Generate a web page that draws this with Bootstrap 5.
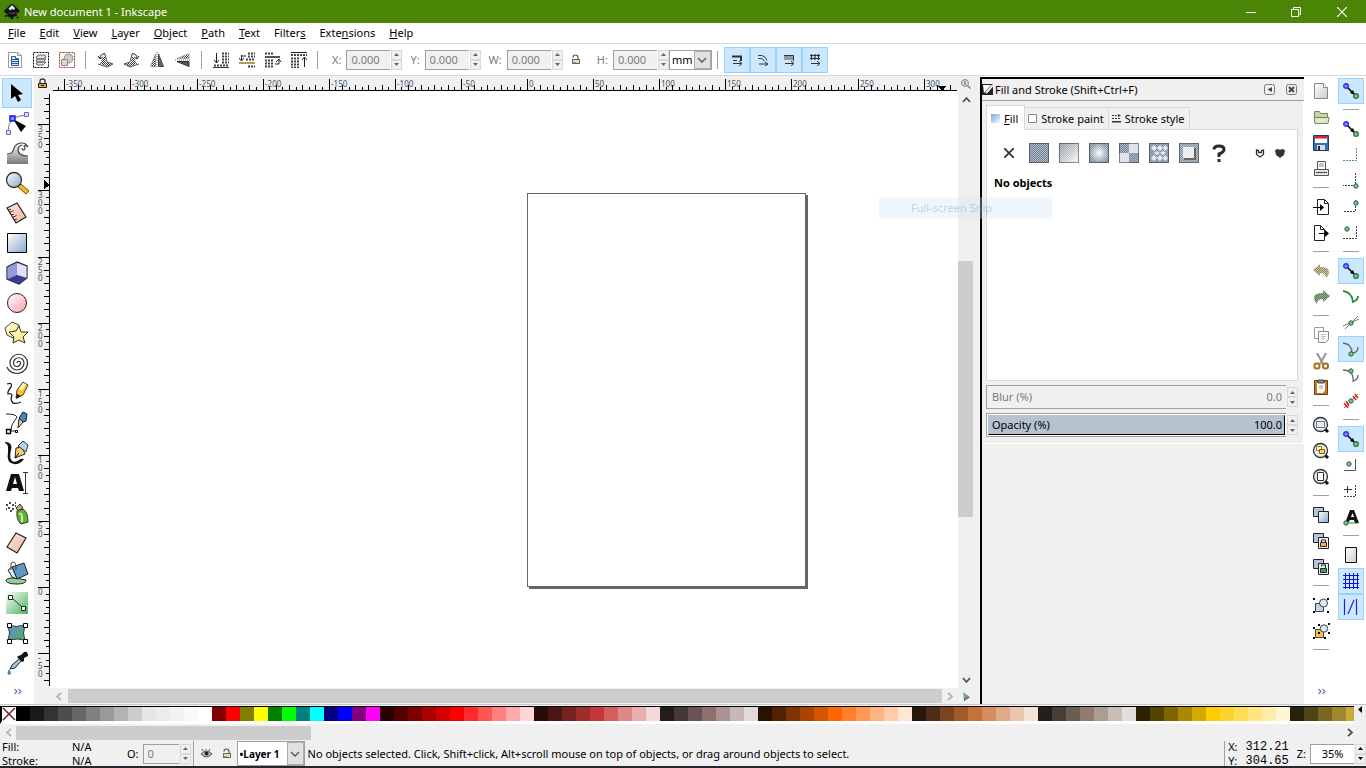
<!DOCTYPE html>
<html lang="en">
<head>
<meta charset="utf-8">
<meta name="viewport" content="width=device-width, initial-scale=1">
<title>New document 1 - Inkscape</title>
<link rel="stylesheet" href="https://cdn.jsdelivr.net/npm/bootstrap@5.3.0/dist/css/bootstrap.min.css">
<style>
  :root { --face:#f0f0f0; --edge:#d9d9d9; --line:#a0a0a0; --thumb:#cdcdcd; --on:#cce8ff; --on-edge:#99d1ff; --dim:#7b7b7b; }
  body { font-family:"Noto Sans","Open Sans",sans-serif; font-size:11px; line-height:14px; color:#000; background:#fff; }
  button { padding:0; border:0; background:none; color:inherit; line-height:1; }
  svg { display:block; flex:none; }
  .titlebar { height:23px; background:#4b8505; color:#fff; }
  .titlebar button { width:45px; height:23px; }
  .titlebar button:last-child { width:48px; }
  .menubar { height:21px; border-bottom:1px solid var(--edge); padding-left:1px; }
  .menubar .nav-link { padding:3px 7px; color:#000; }
  .toolbar { height:32px; border-bottom:1px solid var(--edge); padding-left:2px; }
  .tb { width:26px; height:26px; display:grid; place-items:center; flex:none; }
  .vsep { width:1px; height:18px; background:var(--line); margin:0 6px 0 5px; flex:none; }
  .on { background:var(--on); border:1px solid var(--on-edge); }
  .field { display:flex; align-items:center; color:var(--dim); }
  .field label { margin-right:5px; }
  .field input { width:44px; height:20px; border:1px solid var(--line); border-right:0; padding:0 4px; background:var(--face); color:var(--dim); border-radius:0; min-width:0; }
  .spin { display:flex; flex-direction:column; width:11px; margin-left:1px; }
  .spin button { height:10px; background:var(--face); border:1px solid var(--edge); display:grid; place-items:center; color:#666; }
  .pick { display:flex; border:1px solid var(--line); background:#fff; }
  .pick select { appearance:none; border:0; background:#fff; color:#000; padding:0 2px; flex:1; min-width:0; }
  .pick span { display:grid; place-items:center; width:17px; background:#e1e1e1; border:1px solid #adadad; }
  .unit { width:43px; height:20px; }
  .toolbox { width:34px; padding-top:2px; }
  .toolbox button { width:30px; height:30px; display:grid; place-items:center; flex:none; }
  .toolbox button:last-child { height:26px; }
  .strip { width:30px; padding-top:2px; }
  .strip hr { width:16px; height:1px; margin:5px 0 6px; border:0; background:var(--line); opacity:1; flex:none; }
  .work { display:grid; grid-template-columns:16px minmax(0,1fr) 22px; grid-template-rows:15px minmax(0,1fr) 16px; background:var(--face); }
  .work svg text { font-size:8px; fill:#40536a; }
  .sheet-area { background:#fff; overflow:hidden; }
  .sheet { left:477px; top:102px; width:279px; height:394px; border:1px solid #666; box-shadow:2px 2px 0 #666; }
  .vbar, .corner { width:16px; }
  .corner { display:grid; place-items:center; }
  .arrow { width:16px; height:16px; display:grid; place-items:center; flex:none; }
  .hthumb { height:14px; background:var(--thumb); margin-left:2px; }
  .vthumb { flex:256 0 0; background:var(--thumb); margin-right:1px; }
  .dock { width:324px; background:var(--face); border-left:2px solid #000; border-top:2px solid #000; margin:1px 2px 0 0; }
  .dock-head { height:22px; border-bottom:1px solid var(--line); padding-right:6px; gap:10px; }
  .dock-body { padding:4px 5px 6px 4px; border-right:1px solid #fff; border-bottom:1px solid #fff; }
  .tabs .nav-link { color:#000; padding:0 4px 0 3px; height:22px; border:1px solid var(--edge); border-left:0; border-bottom:0; border-radius:0; display:flex; align-items:center; gap:4px; }
  .tabs .nav-link.active { height:25px; background:#fff; border-left:1px solid var(--edge); position:relative; margin-bottom:-1px; padding:0 6px 0 4px; }
  .pane { height:252px; background:#fff; border:1px solid var(--edge); padding:8px 7px; }
  .pane .paint { width:30px; height:30px; display:grid; place-items:center; }
  .pane .rule { width:20px; height:30px; display:grid; place-items:center; }
  .slide { display:flex; align-items:center; }
  .slide .bar { height:24px; border:1px solid var(--line); border-right:0; padding:1px; }
  .slide .fillbar { height:20px; padding:0 2px 0 3px; border:1px solid transparent; }
  .slide .full { background:#b6c3ce; border-right-color:#000; border-bottom-color:#000; }
  .slide input { border:0; padding:0; background:none; width:60px; text-align:right; color:inherit; }
  .snip { right:314px; top:121px; width:173px; height:22px; background:rgba(205,230,250,.32); color:rgba(110,110,110,.3); padding:4px 32px; white-space:nowrap; pointer-events:none; }
  .palette { height:21px; background:var(--face); border-top:1px solid #c8c8c8; padding-top:1px; }
  .swatches { border-top:1px solid #000; border-left:2px solid #000; border-bottom:3px solid #fff; height:18px; overflow:hidden; }
  .swatches button { width:14px; height:14px; flex:none; }
  .status { height:26px; background:var(--face); padding-top:1px; }
  .status .field label { margin-right:4px; }
  .status .vsep { margin:0 3px 0 2px; height:26px; }
  .status .layer { width:68px; height:25px; }
  .status .message { margin-left:3px; }
  .tinybtn { width:20px; height:20px; display:grid; place-items:center; flex:none; }
  .paintnames { width:127px; }
  .paintnames div:first-child { width:72px; padding-left:2px; }
  .coords { font-family:"Liberation Mono",monospace; font-size:12px; }
  .foot { height:2px; background:#24262b; }
</style>
</head>
<body class="vh-100 overflow-hidden d-flex flex-column">

<!-- shared symbols -->
<svg width="0" height="0" class="position-absolute" aria-hidden="true">
  <defs>
    <pattern id="dots" width="2" height="2" patternUnits="userSpaceOnUse"><path d="M0 0h1v1H0zM1 1h1v1H1z" fill="#333"/></pattern>
    <pattern id="haze" width="2" height="2" patternUnits="userSpaceOnUse"><path d="M0 0h1v1H0zM1 1h1v1H1z" fill="#f6f6f6"/></pattern>
    <linearGradient id="blue" x2="1" y2="1"><stop stop-color="#fff"/><stop offset="1" stop-color="#86a8cb"/></linearGradient>
    <linearGradient id="gBlue" x2="1" y2="1"><stop stop-color="#7da7d9"/><stop offset="1" stop-color="#f4f8fc"/></linearGradient>
    <linearGradient id="pink" x2="1" y2="1"><stop stop-color="#fff"/><stop offset="1" stop-color="#ff9fae"/></linearGradient>
    <linearGradient id="peach" x2="1" y2="1"><stop stop-color="#fbe9e2"/><stop offset="1" stop-color="#eeb49d"/></linearGradient>
    <linearGradient id="yel" x2="1" y2="1"><stop stop-color="#fff"/><stop offset="1" stop-color="#ffe45c"/></linearGradient>
    <linearGradient id="grn" x2="1" y2="1"><stop stop-color="#fff"/><stop offset="1" stop-color="#46b35a"/></linearGradient>
    <linearGradient id="grey" x2="0" y2="1"><stop stop-color="#fff"/><stop offset="1" stop-color="#777"/></linearGradient>
    <linearGradient id="mesh" x2="1" y2="1"><stop stop-color="#5a92c8"/><stop offset="1" stop-color="#5aa862"/></linearGradient>
    <linearGradient id="sheetg" x2="1" y2="1"><stop stop-color="#fff"/><stop offset="1" stop-color="#ccc"/></linearGradient>
    <linearGradient id="dimg" x2="1" y2="1"><stop stop-color="#7d8b99"/><stop offset="1" stop-color="#fff"/></linearGradient>
    <radialGradient id="dimr"><stop stop-color="#fff"/><stop offset="1" stop-color="#74869a"/></radialGradient>
    <symbol id="up" viewBox="0 0 5 3"><path d="M2.500 0L5 3H0z" fill="currentColor"/></symbol>
    <symbol id="dn" viewBox="0 0 5 3"><path d="M2.500 3L5 0H0z" fill="currentColor"/></symbol>
    <symbol id="chev" viewBox="0 0 10 10"><path d="M1 3l4 4 4-4" fill="none" stroke="#555" stroke-width="1.300"/></symbol>
    <symbol id="unlock" viewBox="0 0 10 11"><path d="M2 3.500Q2 1 4.500 1T7 3.500V6" fill="none" stroke="#555" stroke-width="1.200"/><rect x="1.500" y="5.500" width="7" height="4" fill="#e8dfa8" stroke="#666"/><path d="M2 8h3v1H2z" fill="#998"/></symbol>
    <symbol id="nodes" viewBox="0 0 16 16"><path d="M4 4l7 7" stroke="#000" stroke-width="1.600"/><path d="M12 12l-5-2 3-3z"/><circle cx="3" cy="3" r="2.300" fill="#88f" stroke="#33d" stroke-width="1.400"/><circle cx="13" cy="13" r="2.300" fill="#9bc3a0" stroke="#277a37" stroke-width="1.400"/></symbol>
    <symbol id="more" viewBox="0 0 8 7"><path d="M1 1l2.500 2.500L1 6M5 1l2.500 2.500L5 6" fill="none" stroke="#7676b0" stroke-width="1.200"/></symbol>
    <symbol id="lens" viewBox="0 0 18 18"><path d="M13 13l3 3" stroke="#111" stroke-width="3"/><circle cx="8.500" cy="8.500" r="7" fill="#e4ebf2" stroke="#333" stroke-width="1.300"/></symbol>
    <symbol id="nod" viewBox="0 0 6 6"><circle cx="3" cy="3" r="2.200" fill="#8ab894" stroke="#246b30"/></symbol>
  </defs>
</svg>

<header class="titlebar d-flex align-items-center flex-shrink-0 ps-1">
  <svg width="16" height="16" viewBox="0 0 16 16"><path d="M8 0q1.500 0 3 2l4 4q2 2-1 2.500l-2 1q2 1 1 2t-3 1l-2 3.500-2-2.500-3-1.500q1-1 0-2L.5 8Q-.5 6.500 2 5l4-4q1-1 2-1z" fill="#111"/><path d="M8 1l3 3-1 2-2-1-2 1.500L4.500 4.500z" fill="#dfe6f2"/><path d="M3 8l5 1 5-1-3 2H6z" fill="#445"/><circle cx="2" cy="12" r="1" fill="#111"/><circle cx="13.500" cy="13.500" r="1" fill="#111"/></svg>
  <span class="ms-1 flex-fill">New document 1 - Inkscape</span>
  <button type="button" aria-label="Minimize"><svg class="mx-auto" width="10" height="10"><path d="M0 5.500h10" stroke="#fff"/></svg></button>
  <button type="button" aria-label="Restore"><svg class="mx-auto" width="10" height="10"><path d="M.5 2.500h7v7h-7zM2.500 2.500v-2h7v7h-2" fill="none" stroke="#fff"/></svg></button>
  <button type="button" aria-label="Close"><svg class="mx-auto" width="10" height="10"><path d="M0 0l10 10M10 0L0 10" stroke="#fff" stroke-width="1.200"/></svg></button>
</header>

<nav class="menubar nav flex-nowrap flex-shrink-0" aria-label="Main menu">
  <a class="nav-link" href="#"><u>F</u>ile</a><a class="nav-link" href="#"><u>E</u>dit</a><a class="nav-link" href="#"><u>V</u>iew</a><a class="nav-link" href="#"><u>L</u>ayer</a><a class="nav-link" href="#"><u>O</u>bject</a><a class="nav-link" href="#"><u>P</u>ath</a><a class="nav-link" href="#"><u>T</u>ext</a><a class="nav-link" href="#">Filter<u>s</u></a><a class="nav-link" href="#">Exte<u>n</u>sions</a><a class="nav-link" href="#"><u>H</u>elp</a>
</nav>

<div class="toolbar d-flex align-items-center flex-shrink-0" role="toolbar" aria-label="Select controls">
  <button class="tb" type="button" aria-label="Select all"><svg width="14" height="16"><path d="M.5.5h9l4 3v12H.5z" fill="#fff" stroke="#999"/><path d="M9.500.5v3h4" fill="none" stroke="#999"/><path d="M3.500 4.500h4v2h3v7h-7z" fill="#dbe7f6" stroke="#2558a8"/><path d="M4 7.500h6M4 9.500h6M4 11.500h6" stroke="#2558a8"/></svg></button>
  <button class="tb" type="button" aria-label="Select all in all layers"><svg width="16" height="16"><path d="M.5.5h15v15H.5z" fill="none" stroke="#000" stroke-dasharray="2 1"/><path d="M3 5l3-2h6l1 2-3 2H4zM3 8l3-1h7l-3 3H4zM3 11l3-1h7l-3 3H4z" fill="#ddd" stroke="#666"/></svg></button>
  <button class="tb" type="button" aria-label="Deselect"><svg width="16" height="16"><path d="M.5.5h15v15H.5z" fill="none" stroke="#a33" stroke-dasharray="2 1"/><circle cx="9.500" cy="6.500" r="4.500" fill="#c9ced3" stroke="#888"/><path d="M2.500 7.500h6v6h-6z" fill="#e8d6ad" stroke="#888"/></svg></button>
  <i class="vsep"></i>
  <button class="tb" type="button" aria-label="Rotate left"><svg width="17" height="16"><path d="M8 3l1 8H3zM2 11l7-1 7 2-6 3z" fill="url(#dots)"/><path d="M8 2l2 8 6 2-6 3-9-3" stroke="#555" fill="none"/><path d="M3 6Q3 2 8 1.500M1 4l2 3 3-2" fill="none" stroke="#222"/></svg></button>
  <button class="tb" type="button" aria-label="Rotate right"><svg width="17" height="16"><path d="M9 3L8 11h6zM15 11l-7-1-7 2 6 3z" fill="url(#dots)"/><path d="M9 2L7 10l-6 2 6 3 9-3" stroke="#555" fill="none"/><path d="M14 6Q14 2 9 1.500M16 4l-2 3-3-2" fill="none" stroke="#222"/></svg></button>
  <button class="tb" type="button" aria-label="Flip horizontal"><svg width="16" height="16"><path d="M6.500 2v12.500h-5z" fill="url(#dots)" stroke="#999"/><path d="M9.500 2v12.500h5z" fill="#666" stroke="#444"/><path d="M8 0v16" stroke="#555" stroke-dasharray="1 1"/></svg></button>
  <button class="tb" type="button" aria-label="Flip vertical"><svg width="16" height="16"><path d="M14 6.500H2L14 1.500z" fill="url(#dots)" stroke="#aaa"/><path d="M14 9.500H2l12 5z" fill="#555" stroke="#333"/><path d="M0 8h16" stroke="#777" stroke-dasharray="1 1"/></svg></button>
  <i class="vsep"></i>
  <button class="tb" type="button" aria-label="Lower to bottom"><svg width="17" height="16"><path d="M3.500 1v10M1 8l2.500 3L6 8" fill="none" stroke="#222"/><path d="M9 1.500h7M9 4.500h7M9 7.500h7M9 10.500h7M1 13.500h15" stroke="#444" stroke-dasharray="2 1" stroke-width="2"/><path d="M0 15.500h16" stroke="#333"/></svg></button>
  <button class="tb" type="button" aria-label="Lower"><svg width="17" height="16"><path d="M2.500 3v5M0 6l2.500 3L5 6M3 4h4" fill="none" stroke="#222"/><path d="M9 1.500h7M9 4.500h7M7 7.500h9M9 14.500h7" stroke="#444" stroke-dasharray="2 1" stroke-width="2"/><path d="M0 11h16" stroke="#b59b5c" stroke-width="2"/></svg></button>
  <button class="tb" type="button" aria-label="Raise"><svg width="17" height="16"><path d="M0 1.500h8M0 8.500h8M0 11.500h8M0 14.500h8" stroke="#444" stroke-dasharray="2 1" stroke-width="2"/><path d="M0 5h15" stroke="#555" stroke-width="2"/><path d="M14 12V8M11 10l3-3 2 3M10 12h4" fill="none" stroke="#222"/></svg></button>
  <button class="tb" type="button" aria-label="Raise to top"><svg width="17" height="16"><path d="M0 .5h16" stroke="#222"/><path d="M0 3h16M0 6.500h8M0 9.500h8M0 12.500h8M0 15.500h8" stroke="#444" stroke-dasharray="2 1" stroke-width="2"/><path d="M13.500 15V6M11 8l2.500-3L16 8" fill="none" stroke="#222"/></svg></button>
  <i class="vsep"></i>
  <div class="field ms-2"><label for="fx">X:</label><input id="fx" value="0.000" disabled><div class="spin"><button type="button" aria-label="Increase X"><svg width="5" height="3"><use href="#up"/></svg></button><button type="button" aria-label="Decrease X"><svg width="5" height="3"><use href="#dn"/></svg></button></div></div>
  <div class="field ms-2"><label for="fy">Y:</label><input id="fy" value="0.000" disabled><div class="spin"><button type="button" aria-label="Increase Y"><svg width="5" height="3"><use href="#up"/></svg></button><button type="button" aria-label="Decrease Y"><svg width="5" height="3"><use href="#dn"/></svg></button></div></div>
  <div class="field ms-2"><label for="fw">W:</label><input id="fw" value="0.000" disabled><div class="spin"><button type="button" aria-label="Increase W"><svg width="5" height="3"><use href="#up"/></svg></button><button type="button" aria-label="Decrease W"><svg width="5" height="3"><use href="#dn"/></svg></button></div></div>
  <button class="tb" type="button" aria-label="Lock ratio"><svg width="10" height="11"><use href="#unlock"/></svg></button>
  <div class="field ms-2"><label for="fh">H:</label><input id="fh" value="0.000" disabled><div class="spin"><button type="button" aria-label="Increase H"><svg width="5" height="3"><use href="#up"/></svg></button><button type="button" aria-label="Decrease H"><svg width="5" height="3"><use href="#dn"/></svg></button></div></div>
  <div class="pick unit"><select aria-label="Unit" id="unit"><option>mm</option></select><span><svg width="10" height="10"><use href="#chev"/></svg></span></div>
  <i class="vsep"></i>
  <button class="tb on" type="button" aria-label="Scale stroke width"><svg width="12" height="12"><path d="M1 2.500h9V7" fill="none" stroke="#333" stroke-width="2"/><path d="M2 6.500h4M2 9.500h8M8 7l3 2.500L8 12" stroke="#333" fill="none"/></svg></button>
  <button class="tb on" type="button" aria-label="Scale rounded corners"><svg width="12" height="12"><path d="M1 1.500h4q4 1 5 5M1 4.500h3q3 0 3 3" fill="none" stroke="#444"/><path d="M2 10h8M8 8l3 2-3 2" stroke="#333" fill="none"/></svg></button>
  <button class="tb on" type="button" aria-label="Move gradients"><svg width="12" height="12"><path d="M1 1h9v5H1z" fill="#8b98a5"/><path d="M1 1.500h9.500V7M2 9.500h8M8 7l3 2.500L8 12" stroke="#333" fill="none"/></svg></button>
  <button class="tb on" type="button" aria-label="Move patterns"><svg width="12" height="12"><path d="M1 1.500h10M1 4.500h10M2.500 0v6M6 0v6M9.500 0v6" stroke="#333" stroke-width="1.200"/><path d="M2 9.500h8M8 7l3 2.500L8 12" stroke="#333" fill="none"/></svg></button>
</div>

<main class="d-flex flex-fill position-relative" style="min-height:0">
  <div class="toolbox d-flex flex-column align-items-center flex-shrink-0" role="toolbar" aria-label="Tools">
    <button class="on" type="button" aria-label="Select"><svg width="22" height="24"><path d="M5 3v15l4-3 3 6 3-2-3-5 5-1z"/></svg></button>
    <button type="button" aria-label="Edit nodes"><svg width="24" height="24"><path d="M3 20Q3 5 21 4" fill="none" stroke="#777"/><path d="M8 8l13 7-5 6z"/><path d="M5 5h5v5H5z" fill="#88f" stroke="#11d" stroke-width="1.400"/><path d="M19.500 1.500h4v4h-4zM1.500 19.500h4v4h-4z" fill="#ddf" stroke="#66c"/></svg></button>
    <button type="button" aria-label="Tweak"><svg width="24" height="24"><path d="M2 23V13q6 0 7-6 2-5 8-5 4 0 6 4-5-3-7 0-3 5 0 7 2 2 7 2v8z" fill="url(#grey)"/><path d="M2 13q6 0 7-6 2-5 8-5 4 0 6 4-2-2-4-1 2 3 0 4-2 0-2-2M17 4q-4 1-4 5 0 6 10 6" fill="none" stroke="#444" stroke-width="1.200"/></svg></button>
    <button type="button" aria-label="Zoom"><svg width="26" height="26"><path d="M14 17l3-3 8 7-3 3z" fill="#f7b32d" stroke="#7a4a00"/><circle cx="10" cy="10" r="7.500" fill="url(#blue)" stroke="#333" stroke-width="1.300"/></svg></button>
    <button type="button" aria-label="Measure"><svg width="24" height="26"><path d="M2 8l10-5 9 14-10 6z" fill="url(#peach)" stroke="#222" stroke-width="1.200"/><path d="M3 10l3-1M4.500 12.500l4-2M6 15l3-1M7.500 17.500l4-2M9 20l3-1" stroke="#622"/></svg></button>
    <button type="button" aria-label="Rectangle"><svg width="22" height="22"><path d="M1.500 1.500h19v19h-19z" fill="url(#blue)" stroke="#000"/></svg></button>
    <button type="button" aria-label="3D box"><svg width="24" height="26"><path d="M2 7l10-5 10 4v12l-8 6L2 19z" fill="#8a8ad2" stroke="#223" stroke-width="1.200"/><path d="M2.500 7.500l9-4.500v13l-9 3z" fill="#9a9ae0"/><path d="M12 3l9.500 3.500v11L12 15z" fill="#e0e0fa"/><path d="M12 15l9 3-7 5.500-11-4.500z" fill="#3a3a9c"/></svg></button>
    <button type="button" aria-label="Ellipse"><svg width="22" height="22"><circle cx="11" cy="11" r="9.500" fill="url(#pink)" stroke="#222"/></svg></button>
    <button type="button" aria-label="Star"><svg width="26" height="24"><path d="M8 1l7 3 0 8-6 5-6-3-2-7z" fill="url(#yel)" stroke="#443"/><path d="M15 5l2 6 7 0-5 5 2 6-6-3-6 3 1-6-5-5 7-1z" fill="url(#yel)" stroke="#332"/></svg></button>
    <button type="button" aria-label="Spiral"><svg width="24" height="24"><path d="M12 12A1.750 1.750 0 0 1 15.500 12A3.500 3.500 0 0 1 8.500 12A5.250 5.250 0 0 1 19 12A7 7 0 0 1 5 12A8.750 8.750 0 0 1 22.500 12A10.500 10.500 0 0 1 12 22.500Q4 22 2 16" fill="none" stroke="#333" stroke-width="1.200"/></svg></button>
    <button type="button" aria-label="Pencil"><svg width="24" height="24"><path d="M2 3q6-2 4 3-4 5-3 7 3-1 4 1-2 5 1 8 4 1 8-1" fill="none" stroke="#222" stroke-width="1.300"/><path d="M11 17l1-8 6-8 5 3-5 10z" fill="#ffc02e" stroke="#533"/><path d="M11 18l1-5 4 2z" fill="#111"/><path d="M14 8l4-6 3 1-4 7z" fill="#fff3ae"/></svg></button>
    <button type="button" aria-label="Bezier"><svg width="24" height="24"><path d="M1 3q10 0 11 3-2 3-5 8-1 3-1 6h6" fill="none" stroke="#222"/><path d="M13 17l1-9 5 2z" fill="#eecd90" stroke="#222"/><path d="M14 7l4-6 4 2-1 7-3 1z" fill="#4b86b8" stroke="#123"/><path d="M1.500 18.500h4v4h-4z" fill="#fff" stroke="#000" stroke-width="1.300"/><path d="M10.500 19.500h2v2h-2z" fill="#fff" stroke="#000"/></svg></button>
    <button type="button" aria-label="Calligraphy"><svg width="26" height="26"><path d="M1 2q8 0 6 8-2 8 1 11 3 2 7-1 2-2 5-1-4 6-10 5Q2 23 4 12 5 4 1 3z" fill="#111"/><path d="M11 18l1-10 6-1 3 7z" fill="#f5cf6c" stroke="#321"/><path d="M14 6l5-5 5 4-2 7z" fill="#b8d4ea" stroke="#234"/><path d="M11 18l4-5" stroke="#000"/></svg></button>
    <button type="button" aria-label="Text"><svg width="24" height="24"><path d="M6 3h8l5 17h-5l-1-3H7l-1 3H1zM8 13h4L10 6z" fill="#111" fill-rule="evenodd"/><path d="M18 1.500h5M20.500 2v20M18 22.500h5" stroke="#333"/></svg></button>
    <button type="button" aria-label="Spray"><svg width="26" height="26"><path d="M2 5h2M5 3h2M4 8h2M8 5h2M8 9h2M2 9h1M11 6h1M6 11h2M11 3h1" stroke="#111" stroke-width="1.500"/><path d="M13 11l6-2q5 3 5 13l-7 2q-5-4-4-13z" fill="#62b133" stroke="#333"/><path d="M15 14q4-2 3 8" stroke="#c7f29b" stroke-width="2" fill="none"/><path d="M12 8l4-4 3 4-5 3z" fill="#c8a86a" stroke="#333"/></svg></button>
    <button type="button" aria-label="Eraser"><svg width="24" height="26"><path d="M2 17L11 3l10 5-9 15z" fill="url(#peach)" stroke="#222" stroke-width="1.200"/></svg></button>
    <button type="button" aria-label="Paint bucket"><svg width="26" height="26"><path d="M2 21q0-3 6-3t14 2q0 4-9 4T2 21z" fill="#8fd39a" stroke="#222"/><path d="M8 7l12-4 4 11-11 5z" fill="#5f97c4" stroke="#222"/><path d="M4 10l4-3 5 12-5-2z" fill="#dcebf5" stroke="#222"/><path d="M7 10V3q4-3 5 3v4" fill="none" stroke="#444"/></svg></button>
    <button type="button" aria-label="Gradient"><svg width="24" height="24"><path d="M1 1h22v22H1z" fill="url(#grn)"/><path d="M7 7l10 9" stroke="#333"/><path d="M3.500 4.500h4v4h-4zM16.500 15.500h4v4h-4z" fill="#fff" stroke="#222"/></svg></button>
    <button type="button" aria-label="Mesh"><svg width="24" height="24"><path d="M3 4q8 3 17 0-3 8 0 16-7-4-17 0 3-8 0-16z" fill="url(#mesh)" stroke="#233"/><path d="M2.500 2.500h4v4h-4zM18.500 2.500h4v4h-4zM2.500 18.500h4v4h-4zM18.500 18.500h4v4h-4z" fill="#fff" stroke="#000"/></svg></button>
    <button type="button" aria-label="Dropper"><svg width="24" height="26"><path d="M5 19l2-4 8-7 2 2-7 8z" fill="#9cc3df" stroke="#222"/><path d="M13 6l3-1 3-3q4-1 4 4l-4 2 0 3-2 1-5-5z" fill="#111"/><path d="M4 19q4 5 0 6-3-1 0-6z" fill="#4c86b8"/></svg></button>
    <button type="button" aria-label="More tools"><svg width="9" height="7"><use href="#more"/></svg></button>
  </div>

  <div class="work flex-fill" style="min-width:0">
    <div class="corner"><svg width="9" height="11"><path d="M2 5V3q0-2 2.500-2T7 3v2" fill="none" stroke="#333" stroke-width="1.300"/><path d="M.5 5.500h8v4h-8z" fill="#e5a92c" stroke="#222"/><path d="M3 7.500h3" stroke="#222"/></svg></div>
    <svg id="hruler" width="100%" height="15" shape-rendering="crispEdges" role="img" aria-label="Horizontal ruler"></svg>
    <button class="corner" type="button" aria-label="Zoom with window"><svg width="10" height="10"><circle cx="4" cy="4" r="3.500" fill="#ddd" stroke="#888"/><path d="M4 2v4M6.500 6.500L9.500 9.500" stroke="#777" stroke-width="1.300"/></svg></button>
    <svg id="vruler" width="16" height="100%" shape-rendering="crispEdges" role="img" aria-label="Vertical ruler"></svg>
    <div class="sheet-area position-relative"><div class="sheet position-absolute"></div></div>
    <div class="d-flex flex-column vbar">
      <button class="arrow" type="button" aria-label="Scroll up"><svg width="9" height="7"><path d="M1 6l3.500-4L8 6" fill="none" stroke="#505050" stroke-width="1.800"/></svg></button>
      <div style="flex:154 0 0"></div><div class="vthumb"></div><div style="flex:155 0 0"></div>
      <button class="arrow" type="button" aria-label="Scroll down"><svg width="9" height="7"><path d="M1 1l3.500 4L8 1" fill="none" stroke="#505050" stroke-width="1.800"/></svg></button>
    </div>
    <div></div>
    <div class="d-flex align-items-center">
      <button class="arrow" type="button" aria-label="Scroll left"><svg width="7" height="9"><path d="M6 1L2 4.500 6 8" fill="none" stroke="#b5b5b5" stroke-width="1.800"/></svg></button>
      <div class="hthumb flex-fill"></div>
      <button class="arrow" type="button" aria-label="Scroll right"><svg width="7" height="9"><path d="M1 1l4 3.500L1 8" fill="none" stroke="#b5b5b5" stroke-width="1.800"/></svg></button>
    </div>
    <button class="corner" type="button" aria-label="Color-managed view"><svg width="9" height="9"><path d="M1 0l7 5-6 4z" fill="#6fb27f"/><path d="M4 5l4 0-3 2z" fill="#c33"/><path d="M2 6l3 1-3 2z" fill="#55a"/></svg></button>
  </div>

  <aside class="dock flex-shrink-0 d-flex flex-column">
    <div class="dock-head d-flex align-items-center">
      <div class="flex-fill d-flex align-items-center"><svg width="13" height="13"><path d="M0 1h11v11H0z" fill="#222"/><path d="M1 2h8L2 10z" fill="#fff"/><path d="M4 10l7-8" stroke="#eee" stroke-width="2"/></svg>Fill and Stroke (Shift+Ctrl+F)</div>
      <button type="button" aria-label="Iconify dialog"><svg width="12" height="12"><rect x=".5" y=".5" width="10" height="10" rx="2" fill="none" stroke="#777"/><path d="M8 3v5L3.500 5.500z" fill="#444"/></svg></button>
      <button type="button" aria-label="Close dialog"><svg width="12" height="12"><rect x=".5" y=".5" width="10" height="10" rx="2" fill="none" stroke="#777"/><path d="M3 3l5 5M8 3L3 8" stroke="#444" stroke-width="2"/></svg></button>
    </div>
    <div class="dock-body">
      <div class="tabs nav flex-nowrap align-items-end">
        <button class="nav-link active" type="button"><svg width="9" height="9"><path d="M0 0h9v9H0z" fill="url(#gBlue)"/></svg><span><u>F</u>ill</span></button>
        <button class="nav-link" type="button"><svg width="9" height="9"><path d="M.5.5h8v8h-8z" fill="#fff" stroke="#888"/></svg>Stroke paint</button>
        <button class="nav-link" type="button"><svg width="9" height="9"><path d="M0 1.500h8M0 4.500h9" stroke="#333" stroke-dasharray="2 1"/><path d="M6 0l3 1.500L6 3zM0 7h9v1.500H0z" fill="#333"/></svg>Stroke style</button>
      </div>
      <div class="pane">
        <div class="d-flex" role="group" aria-label="Paint type">
          <button class="paint" type="button" aria-label="No paint"><svg width="10" height="10"><path d="M0 0l10 10M10 0L0 10" stroke="#333" stroke-width="1.800"/></svg></button>
          <button class="paint" type="button" aria-label="Flat color"><svg width="20" height="20"><path d="M0 0h20v20H0z" fill="#74869a"/><path d="M0 0h20v20H0z" fill="url(#haze)" opacity=".45"/><path d="M.5.5h19v19H.5z" fill="none" stroke="#222" stroke-dasharray="1 1"/></svg></button>
          <button class="paint" type="button" aria-label="Linear gradient"><svg width="20" height="20"><path d="M0 0h20v20H0z" fill="url(#dimg)"/><path d="M0 0h20v20H0z" fill="url(#haze)" opacity=".45"/><path d="M.5.5h19v19H.5z" fill="none" stroke="#222" stroke-dasharray="1 1"/></svg></button>
          <button class="paint" type="button" aria-label="Radial gradient"><svg width="20" height="20"><path d="M0 0h20v20H0z" fill="url(#dimr)"/><path d="M0 0h20v20H0z" fill="url(#haze)" opacity=".45"/><path d="M.5.5h19v19H.5z" fill="none" stroke="#222" stroke-dasharray="1 1"/></svg></button>
          <button class="paint" type="button" aria-label="Mesh gradient"><svg width="20" height="20"><path d="M0 0h20v20H0z" fill="#d8dee4"/><path d="M0 0h10v10h10v10H10V10H0z" fill="#74869a"/><path d="M0 0h20v20H0z" fill="url(#haze)" opacity=".45"/><path d="M.5.5h19v19H.5z" fill="none" stroke="#222" stroke-dasharray="1 1"/></svg></button>
          <button class="paint" type="button" aria-label="Pattern"><svg width="20" height="20"><path d="M0 0h20v20H0z" fill="#74869a"/><path d="M2 5l3-3 3 3-3 3zM8 5l3-3 3 3-3 3zM14 5l2-3 3 3-3 3zM2 15l3-3 3 3-3 3zM8 15l3-3 3 3-3 3zM14 15l2-3 3 3-3 3zM5 10l3-2 3 2-3 2zM11 10l3-2 3 2-3 2z" fill="#e4e8ec"/><path d="M0 0h20v20H0z" fill="url(#haze)" opacity=".45"/><path d="M.5.5h19v19H.5z" fill="none" stroke="#222" stroke-dasharray="1 1"/></svg></button>
          <button class="paint" type="button" aria-label="Swatch"><svg width="20" height="20"><path d="M0 0h20v20H0z" fill="#8696a6"/><path d="M0 0h20v20H0z" fill="url(#haze)" opacity=".45"/><path d="M5 5h12v12H5z" fill="#666"/><path d="M4 4h11v11H4z" fill="#eee"/><path d="M.5.5h19v19H.5z" fill="none" stroke="#222" stroke-dasharray="1 1"/></svg></button>
          <button class="paint" type="button" aria-label="Unset paint"><svg width="14" height="18"><path d="M2 5.500Q2 2 7 2t5 3.500Q12 8 7 10v3" fill="none" stroke="#2a2a2a" stroke-width="3"/><path d="M5.500 15h3v3h-3z" fill="#2a2a2a"/></svg></button>
          <button class="rule ms-3" type="button" aria-label="Fill rule even-odd"><svg width="10" height="9"><path d="M1.500 1l2 .5v2h3v-2l2-.5v4.500L5 8 1.500 5.500z" fill="none" stroke="#333" stroke-width="1.300"/></svg></button>
          <button class="rule" type="button" aria-label="Fill rule nonzero"><svg width="10" height="9"><path d="M0 1l3-1 2 1 2-1 3 1-1 5-4 3-4-3z" fill="#333"/></svg></button>
        </div>
        <div class="fw-bold mt-2">No objects</div>
      </div>
      <div class="slide mt-1"><div class="bar flex-fill"><div class="fillbar d-flex align-items-center" style="color:var(--dim)"><label class="flex-fill" for="blur">Blur (%)</label><input id="blur" value="0.0" disabled></div></div><div class="spin"><button type="button" aria-label="Increase blur"><svg width="5" height="3"><use href="#up"/></svg></button><button type="button" aria-label="Decrease blur"><svg width="5" height="3"><use href="#dn"/></svg></button></div></div>
      <div class="slide mt-1"><div class="bar flex-fill bg-white"><div class="fillbar full d-flex align-items-center"><label class="flex-fill" for="opac">Opacity (%)</label><input id="opac" value="100.0"></div></div><div class="spin"><button type="button" aria-label="Increase opacity"><svg width="5" height="3"><use href="#up"/></svg></button><button type="button" aria-label="Decrease opacity"><svg width="5" height="3"><use href="#dn"/></svg></button></div></div>
    </div>
  </aside>

  <div class="strip d-flex flex-column align-items-center flex-shrink-0" role="toolbar" aria-label="Commands">
    <button class="tb" type="button" aria-label="New"><svg width="16" height="16"><path d="M1.500.5h9l4 4v11h-13z" fill="url(#sheetg)" stroke="#888"/><path d="M10.500.5v4h4" fill="#fff" stroke="#888"/></svg></button>
    <button class="tb" type="button" aria-label="Open"><svg width="17" height="16"><path d="M1.500 12V2.500h5l1 2h7V12" fill="#c8d4a4" stroke="#7a8560"/><path d="M1 8.500h15l-1 6H2z" fill="#dfe8c4" stroke="#7a8560"/></svg></button>
    <button class="tb" type="button" aria-label="Save"><svg width="16" height="16"><path d="M.5.5h15v15H.5z" fill="#3c6db2" stroke="#1c3a6c"/><path d="M2 1h12v7H2z" fill="#fff"/><path d="M2 1h12v2.500H2z" fill="#d22"/><path d="M4 10h8v5H4z" fill="#ddd"/><path d="M5 11h2v4H5z" fill="#223"/></svg></button>
    <button class="tb" type="button" aria-label="Print"><svg width="17" height="16"><path d="M4.500 8V.5h8V8" fill="#fff" stroke="#555"/><path d="M6 3h5M6 5h5" stroke="#888"/><path d="M1.500 8.500h14v6h-14z" fill="#e4e4e4" stroke="#555"/><path d="M3 11.500h11" stroke="#444"/></svg></button>
    <hr>
    <button class="tb" type="button" aria-label="Import"><svg width="17" height="16"><path d="M4.500.5h7l4 4v11h-11z" fill="#fff" stroke="#222"/><path d="M11.500.5v4h4" fill="none" stroke="#222"/><path d="M0 8.500h9" stroke="#000"/><path d="M7 5l4 3.500L7 12z"/></svg></button>
    <button class="tb" type="button" aria-label="Export"><svg width="17" height="16"><path d="M1.500.5h6l4 4v11h-10z" fill="#fff" stroke="#222"/><path d="M7.500.5v4h4" fill="none" stroke="#222"/><path d="M6 8.500h8" stroke="#000"/><path d="M12 5l4 3.500-4 3.500z"/></svg></button>
    <hr>
    <button class="tb" type="button" aria-label="Undo"><svg width="17" height="16"><path d="M0 7l7-6v3q9 0 9 5 0 3-3 6 0-5-6-5v3z" fill="#d2c795"/><path d="M0 7l7-6v3q9 0 9 5 0 3-3 6 0-5-6-5v3z" fill="url(#dots)" opacity=".45"/></svg></button>
    <button class="tb" type="button" aria-label="Redo"><svg width="17" height="16"><path d="M17 7l-7-6v3Q1 4 1 9q0 3 3 6 0-5 6-5v3z" fill="#8cb382"/><path d="M17 7l-7-6v3Q1 4 1 9q0 3 3 6 0-5 6-5v3z" fill="url(#dots)" opacity=".45"/></svg></button>
    <hr>
    <button class="tb" type="button" aria-label="Copy"><svg width="17" height="16"><path d="M1.500.5h9v11h-9z" fill="#fff" stroke="#999"/><path d="M5.500 4.500h10v8l-3 3h-7z" fill="#fff" stroke="#888"/><path d="M8 7.500h5M8 9.500h5M8 11.500h4" stroke="#bbb"/></svg></button>
    <button class="tb" type="button" aria-label="Cut"><svg width="17" height="17"><path d="M4 0l6 11M13 0L7 11" stroke="#999" stroke-width="2.200"/><rect x="1.500" y="10.500" width="5" height="5" rx="2" fill="#fff" stroke="#b16a16" stroke-width="2"/><rect x="10" y="10.500" width="5" height="5" rx="2" fill="#fff" stroke="#b16a16" stroke-width="2"/></svg></button>
    <button class="tb" type="button" aria-label="Paste"><svg width="16" height="16"><path d="M1.500 1.500h13v14h-13z" fill="#c07b23" stroke="#6a3e07"/><path d="M4 4h8v7l-2 3H4z" fill="#fff"/><path d="M5 1h6v3H5z" fill="#888" stroke="#444"/><path d="M6 7h4M6 9h4" stroke="#999"/></svg></button>
    <hr>
    <button class="tb" type="button" aria-label="Zoom selection"><svg width="18" height="18"><use href="#lens"/><path d="M4.500 5.500h8v6h-8z" fill="none" stroke="#000" stroke-dasharray="1 1"/></svg></button>
    <button class="tb" type="button" aria-label="Zoom drawing"><svg width="18" height="18"><use href="#lens"/><path d="M4.500 4.500h5v4h-5z" fill="#fff" stroke="#a70"/><path d="M7.500 7.500h5v4h-5z" fill="#ffd75c" stroke="#850"/></svg></button>
    <button class="tb" type="button" aria-label="Zoom page"><svg width="18" height="18"><use href="#lens"/><path d="M5.500 4.500h6v8h-6z" fill="#fff" stroke="#333"/></svg></button>
    <hr>
    <button class="tb" type="button" aria-label="Duplicate"><svg width="17" height="16"><path d="M.5.500h10v9H.5z" fill="#b6c6d6" stroke="#223"/><path d="M5.500 4.500h10v11h-10z" fill="url(#blue)" stroke="#223"/></svg></button>
    <button class="tb" type="button" aria-label="Clone"><svg width="17" height="16"><path d="M.5.500h10v9H.5z" fill="#b6c6d6" stroke="#223"/><path d="M5.500 4.500h10v11h-10z" fill="#e6edf4" stroke="#223"/><path d="M8.500 9V7h4v2" fill="none" stroke="#222"/><path d="M7.500 9.500h6v4h-6z" fill="#f3b72f" stroke="#421"/></svg></button>
    <button class="tb" type="button" aria-label="Unlink clone"><svg width="17" height="16"><path d="M.5.500h10v9H.5z" fill="#b6c6d6" stroke="#223"/><path d="M5.500 4.500h10v11h-10z" fill="#e6edf4" stroke="#223"/><path d="M8.500 7.500V6h4v3" fill="none" stroke="#222"/><path d="M7.500 9.500h6v4h-6z" fill="#4fa04c" stroke="#132"/></svg></button>
    <hr>
    <button class="tb" type="button" aria-label="Group"><svg width="17" height="17"><path d="M2.500 6.500h8v8h-8z" fill="#c7d4e2" stroke="#345"/><circle cx="10.500" cy="6" r="4" fill="#dfe8f0" stroke="#345"/><path d="M0 1h2v2H0zM14 1h2v2h-2zM0 14h2v2H0zM14 14h2v2h-2z"/></svg></button>
    <button class="tb" type="button" aria-label="Ungroup"><svg width="17" height="17"><path d="M2.500 6.500h8v8h-8z" fill="#f2c14b" stroke="#543"/><circle cx="11" cy="5.500" r="3.700" fill="#dfe8f0" stroke="#345"/><path d="M0 4h2v2H0zM0 14h2v2H0zM11 14h2v2h-2zM5 1h2v2H5zM15 0h2v2h-2zM15 9h2v2h-2zM5 9h2v2H5z"/></svg></button>
    <hr>
    <button class="tb mt-auto" type="button" aria-label="More commands"><svg width="9" height="7"><use href="#more"/></svg></button>
  </div>

  <div class="strip d-flex flex-column align-items-center flex-shrink-0" role="toolbar" aria-label="Snapping">
    <button class="tb on" type="button" aria-label="Enable snapping"><svg width="16" height="16"><use href="#nodes"/></svg></button>
    <hr>
    <button class="tb" type="button" aria-label="Snap bounding boxes"><svg width="16" height="16"><use href="#nodes"/></svg></button>
    <button class="tb" type="button" aria-label="Snap to bounding box edges"><svg width="16" height="16"><path d="M13.500 1v12.500H0" fill="none" stroke="#4d9c57" stroke-dasharray="2 1"/></svg></button>
    <button class="tb" type="button" aria-label="Snap to box corners"><svg width="16" height="16"><path d="M12.500 0v12.500H0" fill="none" stroke="#444" stroke-dasharray="2 1"/><use href="#nod" x="10" y="10" width="6" height="6"/></svg></button>
    <button class="tb" type="button" aria-label="Snap to edge midpoints"><svg width="16" height="16"><path d="M12.500 1v11.500H0" fill="none" stroke="#444" stroke-dasharray="2 1"/><use href="#nod" x="10" y="1" width="6" height="6"/></svg></button>
    <button class="tb" type="button" aria-label="Snap to box centers"><svg width="16" height="16"><path d="M13.500 1v12.500H0" fill="none" stroke="#444" stroke-dasharray="2 1"/><use href="#nod" x="1" y="1" width="6" height="6"/></svg></button>
    <hr>
    <button class="tb on" type="button" aria-label="Snap nodes"><svg width="16" height="16"><use href="#nodes"/></svg></button>
    <button class="tb" type="button" aria-label="Snap to paths"><svg width="16" height="16"><path d="M0 2q9 1 10 11 5-2 5-6" fill="none" stroke="#2b8a38" stroke-width="1.800"/></svg></button>
    <button class="tb" type="button" aria-label="Snap to intersections"><svg width="16" height="16"><path d="M0 11l16-7M2 14L15 1" stroke="#777"/><use href="#nod" x="5" y="5" width="6" height="6"/></svg></button>
    <button class="tb on" type="button" aria-label="Snap to cusp nodes"><svg width="16" height="16"><path d="M0 2q9 1 9 10 6 0 6-6" fill="none" stroke="#667" stroke-width="1.300"/><use href="#nod" x="5" y="10" width="6" height="6"/></svg></button>
    <button class="tb" type="button" aria-label="Snap to smooth nodes"><svg width="16" height="16"><path d="M0 3q11 0 10 11 5-1 5-6" fill="none" stroke="#667" stroke-width="1.300"/><use href="#nod" x="5" y="1" width="6" height="6"/></svg></button>
    <button class="tb" type="button" aria-label="Snap to line midpoints"><svg width="16" height="16"><path d="M1 15L15 1" stroke="#777"/><path d="M1 10l4 5M3 8l3 5M10 3l3 4M12 1l3 4" stroke="#d22" stroke-width="1.500"/><use href="#nod" x="5" y="5" width="6" height="6"/></svg></button>
    <hr>
    <button class="tb on" type="button" aria-label="Snap other points"><svg width="16" height="16"><use href="#nodes"/></svg></button>
    <button class="tb" type="button" aria-label="Snap to object centers"><svg width="16" height="16"><path d="M12.500 2v11.500H1" fill="none" stroke="#555"/><use href="#nod" x="3" y="4" width="6" height="6"/></svg></button>
    <button class="tb" type="button" aria-label="Snap rotation centers"><svg width="16" height="16"><path d="M12.500 2v11.500H1" fill="none" stroke="#444" stroke-dasharray="2 1"/><path d="M1 6.500h8M4.500 3v7" stroke="#333"/></svg></button>
    <button class="tb" type="button" aria-label="Snap text anchors"><svg width="16" height="17"><path d="M7 1h4l5 13h-4l-1-3H7l-2 3H2zM8 8h3L9.500 4z" fill="#111" fill-rule="evenodd"/><path d="M3 14h12" stroke="#2b8a38"/><use href="#nod" x="0" y="11" width="6" height="6"/></svg></button>
    <hr>
    <button class="tb" type="button" aria-label="Snap to page border"><svg width="14" height="16"><path d="M1.500.5h11v15h-11z" fill="url(#sheetg)" stroke="#111"/></svg></button>
    <button class="tb on" type="button" aria-label="Snap to grids"><svg width="16" height="16"><path d="M2.500 0v16M6.500 0v16M10.500 0v16M14.500 0v16M0 2.500h16M0 6.500h16M0 10.500h16M0 14.500h16" stroke="#11d"/></svg></button>
    <button class="tb on" type="button" aria-label="Snap to guides"><svg width="16" height="16"><path d="M1.500 0v16M13.500 0v16M5 15L11 1" stroke="#22d" stroke-width="1.200"/></svg></button>
  </div>

  <div class="snip position-absolute">Full-screen Snip</div>
</main>

<div class="palette d-flex flex-shrink-0">
  <div class="swatches d-flex flex-fill" id="swatches" role="group" aria-label="Palette"><button class="bg-white" type="button" aria-label="None"><svg width="14" height="14"><path d="M1 1l12 12M13 1L1 13" stroke="#7c1d1d" stroke-width="1.500"/></svg></button></div>
  <button class="d-flex px-1" type="button" aria-label="Palette menu"><svg width="4" height="7"><path d="M4 0v7L0 3.500z"/></svg></button>
</div>

<div class="d-flex align-items-center flex-shrink-0" style="height:15px;background:var(--face)">
  <button class="arrow" type="button" aria-label="Scroll palette left"><svg width="7" height="9"><path d="M6 1L2 4.500 6 8" fill="none" stroke="#b5b5b5" stroke-width="1.800"/></svg></button>
  <div class="flex-fill"><div style="width:22.400%;height:14px;background:var(--thumb)"></div></div>
  <button class="arrow me-2 ms-2" type="button" aria-label="Scroll palette right"><svg width="7" height="9"><path d="M1 1l4 3.500L1 8" fill="none" stroke="#505050" stroke-width="1.800"/></svg></button>
</div>

<footer class="status d-flex align-items-center flex-shrink-0">
  <div class="paintnames d-flex flex-shrink-0"><div>Fill:<br>Stroke:</div><div>N/A<br>N/A</div></div>
  <div class="field"><label class="text-black" for="op">O:</label><input id="op" value="0" style="width:36px" disabled><div class="spin"><button type="button" aria-label="Increase O"><svg width="5" height="3"><use href="#up"/></svg></button><button type="button" aria-label="Decrease O"><svg width="5" height="3"><use href="#dn"/></svg></button></div></div>
  <i class="vsep"></i>
  <button class="tinybtn" type="button" aria-label="Layer visibility"><svg width="11" height="9"><path d="M0 5q5-6 11 0-6 6-11 0z" fill="#bbb" stroke="#555"/><circle cx="5.500" cy="4.500" r="2" fill="#222"/><path d="M2 2L1 0M5 1V0M8 2l1-2" stroke="#555"/></svg></button>
  <button class="tinybtn" type="button" aria-label="Layer lock"><svg width="10" height="11"><use href="#unlock"/></svg></button>
  <div class="pick layer"><select class="fw-bold" id="layer" aria-label="Layer" style="font-size:10px"><option>•Layer 1</option></select><span><svg width="10" height="10"><use href="#chev"/></svg></span></div>
  <div class="flex-fill text-nowrap message">No objects selected. Click, Shift+click, Alt+scroll mouse on top of objects, or drag around objects to select.</div>
  <i class="vsep"></i>
  <div class="me-2">X:<br>Y:</div><div class="coords me-2">312.21<br>304.65</div>
  <div class="field text-black"><label for="zoom">Z:</label><input class="bg-white text-black text-center" id="zoom" value="35%"><div class="spin"><button class="text-black" type="button" aria-label="Zoom in"><svg width="5" height="3"><use href="#up"/></svg></button><button class="text-black" type="button" aria-label="Zoom out"><svg width="5" height="3"><use href="#dn"/></svg></button></div></div>
</footer>
<div class="foot flex-shrink-0"></div>

<script>
  // Rulers: one millimetre is 1.322 px at this zoom; the origin is the page's lower left corner.
  const SCALE = 1.322, ORIGIN_X = 477, ORIGIN_Y = 496;
  const tick = u => u % 50 === 0 ? 11 : u % 10 === 0 ? 5 : 3;
  let h = '', v = '';
  for (let u = -355; u <= 320; u += 5) {
    const x = Math.round(ORIGIN_X + u * SCALE), len = tick(u);
    h += `<path d="M${x} ${14 - len}h1v${len}h-1z"/>`;
    if (u % 50 === 0) h += `<text x="${x + 2}" y="11">${u}</text>`;
  }
  h += '<path d="M3 14h904v1H3z"/><path d="M887 10h9l-4 5z"/>';
  for (let u = -70; u <= 370; u += 5) {
    const y = Math.round(ORIGIN_Y - u * SCALE), len = tick(u);
    v += `<path d="M${15 - len} ${y}h${len}v1h-${len}z"/>`;
    if (u % 50 === 0) {
      v += `<text y="${y}">` + [...String(u)].map(c => `<tspan x="4" dy="8">${c}</tspan>`).join('') + '</text>';
    }
  }
  v += '<path d="M15 3h1v592h-1z"/><path d="M10 89v9l6-4z"/>';
  document.getElementById('hruler').innerHTML = h;
  document.getElementById('vruler').innerHTML = v;

  const colors = ('000 1a1a1a 333 4d4d4d 666 808080 999 b3b3b3 ccc e6e6e6 ececec f2f2f2 f9f9f9 fff ' +
    '800000 f00 808000 ff0 008000 0f0 008080 0ff 000080 00f 800080 f0f ' +
    '2b0000 550000 800000 a00 d40000 f00 ff2a2a f55 ff8080 faa ffd5d5 ' +
    '280b0b 501616 782121 a02c2c c83737 d35f5f de8787 e9afaf f4d7d7 ' +
    '241c1c 483737 6c5353 916f6f ac9393 c8b7b7 e3dbdb ' +
    '2b1100 520 803300 a40 d45500 f60 ff7f2a f95 ffb380 fca ffe6d5 ' +
    '28170b 502d16 784421 a05a2c c87137 d38d5f deaa87 e9c6af f4e3d7 ' +
    '241f1c 483e37 6c5d53 917c6f ac9d93 c8beb7 e3dedb ' +
    '2b2200 540 806600 a80 d4aa00 fc0 ffd42a fd5 ffe680 fea fff6d5 ' +
    '28220b 504416 786721 a0892c c8ab37').split(' ');
  document.getElementById('swatches').insertAdjacentHTML('beforeend',
    colors.map(c => `<button type="button" aria-label="#${c}" style="background:#${c}"></button>`).join(''));
</script>
<script src="https://cdn.jsdelivr.net/npm/bootstrap@5.3.0/dist/js/bootstrap.bundle.min.js"></script>
</body>
</html>
